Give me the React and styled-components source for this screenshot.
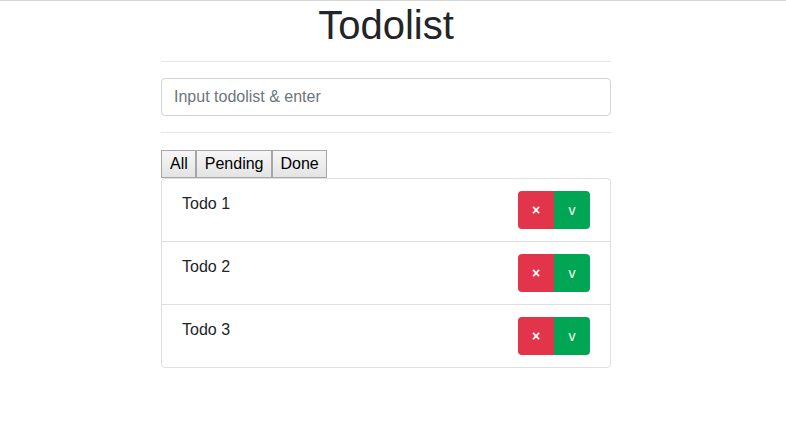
import React, { useState } from "react"
import styled, { createGlobalStyle } from "styled-components"

const GlobalStyle = createGlobalStyle`
  html, body {
    margin: 0;
    padding: 0;
    background: #fff;
  }
  body {
    border-top: 1px solid #d6d6d6;
    padding-right: 14px;
    font-family: "Helvetica Neue", "Liberation Sans", Arial, sans-serif;
    font-size: 16px;
    line-height: 1.5;
    color: #212529;
  }
  * {
    box-sizing: border-box;
  }
`

const Container = styled.div`
  width: 450px;
  margin: 0 auto;
`

const Title = styled.h1`
  margin: 0 0 12px;
  font-size: 40px;
  font-weight: 500;
  line-height: 48px;
  text-align: center;
`

const Rule = styled.hr`
  margin: 0 0 16px;
  border: 0;
  border-top: 1px solid rgba(0, 0, 0, 0.1);
`

const TodoInput = styled.input`
  display: block;
  width: 100%;
  height: 38px;
  margin-bottom: 16px;
  padding: 6px 12px;
  font: inherit;
  color: #495057;
  border: 1px solid #ced4da;
  border-radius: 4px;
  outline: none;

  &::placeholder {
    color: #6c757d;
  }
`

const Filters = styled.div`
  display: flex;
  margin-top: 17px;
`

const FilterButton = styled.button`
  height: 28px;
  padding: 0 7px 0 8px;
  font: inherit;
  font-size: 16px;
  color: #000;
  background: linear-gradient(#f6f6f6, #e4e4e4);
  border: 1px solid #a6a6a6;
  border-radius: 0;
`

const List = styled.ul`
  margin: 0;
  padding: 0;
  list-style: none;
  border: 1px solid rgba(0, 0, 0, 0.125);
  border-radius: 4px;
`

const Item = styled.li`
  display: flex;
  justify-content: space-between;
  align-items: flex-start;
  padding: 12px 20px;
  & + & {
    border-top: 1px solid rgba(0, 0, 0, 0.125);
  }
`

const Label = styled.span`
  line-height: 24px;
  padding-top: 1px;
`

const Actions = styled.div`
  display: flex;
`

const ActionButton = styled.button`
  width: 36px;
  height: 38px;
  padding: 0;
  border: 0;
  font-family: inherit;
  font-size: 14px;
  font-weight: ${(p) => (p.$kind === "remove" ? 700 : 400)};
  color: #fff;
  background: ${(p) => (p.$kind === "remove" ? "#e2344a" : "#00a653")};
  border-radius: ${(p) => (p.$kind === "remove" ? "4px 0 0 4px" : "0 4px 4px 0")};
`

const todos = ["Todo 1", "Todo 2", "Todo 3"]

export default function App() {
  const [value, setValue] = useState("")
  return (
    <>
      <GlobalStyle />
      <Container>
        <Title>Todolist</Title>
        <Rule />
        <TodoInput
          placeholder="Input todolist & enter"
          value={value}
          onChange={(e) => setValue(e.target.value)}
        />
        <Rule />
        <Filters>
          <FilterButton>All</FilterButton>
          <FilterButton>Pending</FilterButton>
          <FilterButton>Done</FilterButton>
        </Filters>
        <List>
          {todos.map((t) => (
            <Item key={t}>
              <Label>{t}</Label>
              <Actions>
                <ActionButton $kind="remove">×</ActionButton>
                <ActionButton $kind="done">v</ActionButton>
              </Actions>
            </Item>
          ))}
        </List>
      </Container>
    </>
  )
}
